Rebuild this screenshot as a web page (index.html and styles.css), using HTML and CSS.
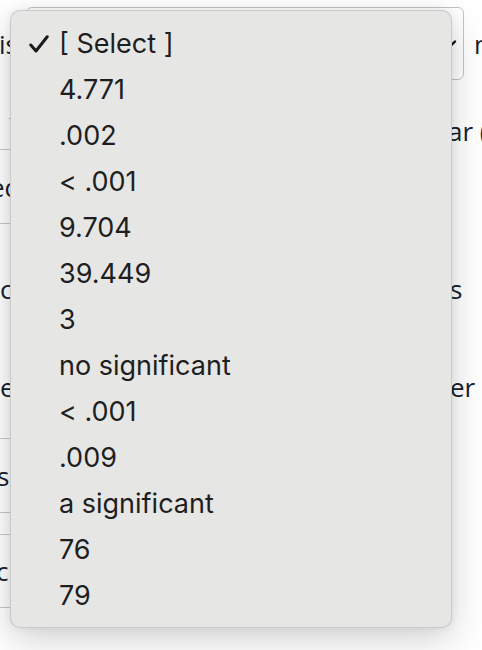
FILE: index.html
```html
<!DOCTYPE html>
<html lang="en">
<head>
  <meta charset="UTF-8">
  <meta name="viewport" content="width=device-width, initial-scale=1.0">
  <title>Question</title>
  <link rel="stylesheet" href="styles.css">
</head>
<body>
  <div class="page">
    <div class="select-row">
      <span class="word lead">is</span>
      <div class="select">
        <svg class="chevron" width="14" height="10" viewBox="0 0 14 10">
          <path d="M2 2.5 L7 7.5 L12 2.5" fill="none" stroke="#111" stroke-width="2.4" stroke-linecap="round" stroke-linejoin="round"/>
        </svg>
      </div>
      <span class="word">n</span>
    </div>

    <div class="rows">
      <div class="row r1"><span class="cell">-</span><span class="side">ar (</span></div>
      <div class="row r2"><span class="cell">ed</span><span class="side"></span></div>
      <div class="row r3">
        <span class="cell">c<br>e</span>
        <span class="side">s<br>er</span>
      </div>
      <div class="row r4"><span class="cell">s</span><span class="side"></span></div>
      <div class="row r5"><span class="cell"></span><span class="side"></span></div>
      <div class="row r6"><span class="cell">c</span><span class="side"></span></div>
    </div>
  </div>

  <ul class="menu">
    <li class="checked">
      <svg class="check" width="20" height="18" viewBox="0 0 20 18">
        <path d="M1.8 10 L7 16 L18.2 1.8" fill="none" stroke="#1b1b1b" stroke-width="3" stroke-linecap="round" stroke-linejoin="round"/>
      </svg>
      [ Select ]
    </li>
    <li>4.771</li>
    <li>.002</li>
    <li>&lt; .001</li>
    <li>9.704</li>
    <li>39.449</li>
    <li>3</li>
    <li>no significant</li>
    <li>&lt; .001</li>
    <li>.009</li>
    <li>a significant</li>
    <li>76</li>
    <li>79</li>
  </ul>
</body>
</html>
```

FILE: styles.css
```css
*{
  margin:0;
  padding:0;
  box-sizing:border-box;
}
html,body{
  width:482px;
  height:650px;
  overflow:hidden;
}
body{
  background:#fff;
  font-family:"Open Sans","Liberation Sans",sans-serif;
  color:#17222f;
  position:relative;
}
.page{
  width:482px;
}
.select-row{
  display:flex;
  align-items:center;
  height:88px;
  font-size:26px;
  white-space:nowrap;
}
.lead{
  flex-shrink:0;
  width:27px;
}
.select{
  flex-shrink:0;
  width:438px;
  height:73px;
  margin-top:-1px;
  border:1px solid #c4c4c4;
  border-radius:6px;
  background:#fff;
  display:flex;
  align-items:center;
  justify-content:flex-end;
}
.chevron{
  margin-right:6px;
}
.word{
  margin-left:10px;
}
.lead.word{
  margin-left:-1px;
}
.rows{
  width:482px;
  font-size:26px;
}
.row{
  display:flex;
  border-bottom:1px solid #c9c9c9;
  border-image:linear-gradient(to right,#c9c9c9 0,#c9c9c9 450px,transparent 450px) 1;
}
.cell{
  width:446px;
  flex-shrink:0;
  padding-left:2px;
  display:flex;
  flex-direction:column;
  justify-content:center;
}
.side{
  flex:1;
  white-space:nowrap;
  display:flex;
  flex-direction:column;
  justify-content:center;
}
.r1{ height:62px; }
.r1 .cell{ font-size:14px; justify-content:flex-end; padding-left:9px; padding-bottom:22px; }
.r1 .side{ justify-content:flex-end; margin-left:2px; }
.r2{ height:74px; }
.r2 .cell{ margin-left:-12px; }
.r3{ height:215px; }
.r3 .cell,
.r3 .side{ line-height:98px; padding-top:14px; }
.r3 .cell{ margin-left:-2px; }
.r3 .side{ padding-left:6px; }
.r4{ height:74px; }
.r4 .cell{ margin-left:-5px; }
.r5{ height:22px; }
.r6{ height:73px; }
.r6 .cell{ margin-left:-6px; }

/* popup menu */
.menu{
  position:absolute;
  left:10px;
  top:10px;
  width:442px;
  height:618px;
  list-style:none;
  padding:10px 0;
  background:#e6e6e5;
  border-radius:10px;
  border:1px solid rgba(0,0,0,.12);
  box-shadow:0 12px 36px rgba(0,0,0,.18),0 0 10px rgba(0,0,0,.07);
  font-family:Inter,"Liberation Sans",sans-serif;
  font-size:27px;
  color:#1e1e1e;
}
.menu li{
  position:relative;
  height:46px;
  line-height:46px;
  padding-left:48px;
}
.check{
  position:absolute;
  left:18px;
  top:14px;
}
```
